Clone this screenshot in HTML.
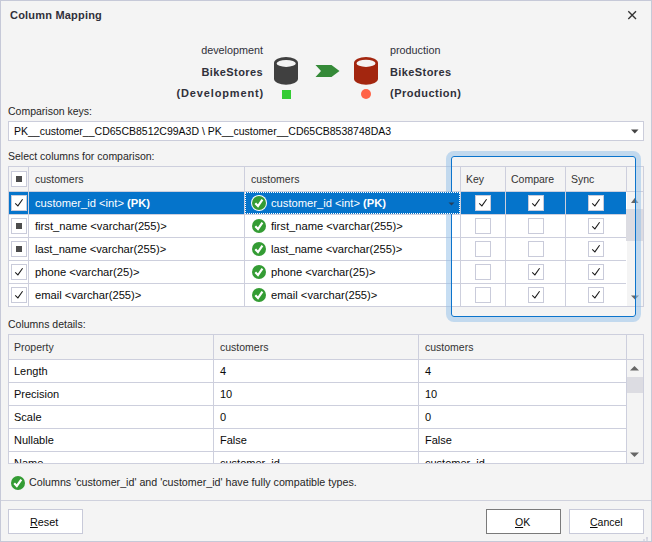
<!DOCTYPE html>
<html><head><meta charset="utf-8">
<style>
*{box-sizing:border-box;margin:0;padding:0}
html,body{width:652px;height:542px;overflow:hidden;background:#f4f4f4}
body{position:relative;font-family:"Liberation Sans",sans-serif;font-size:10.5px;color:#262626}
.a{position:absolute;white-space:pre;line-height:13px}
.b{font-weight:bold;font-size:11px;letter-spacing:0.4px;color:#30303a}
.hl{position:absolute}
.cb{position:absolute;width:16px;height:16px;border:1px solid #c9cbda;background:#fff}
.gi{position:absolute;width:16px;height:16px}
</style></head><body>
<div style="position:absolute;left:0;top:0;width:652px;height:542px;border:1px solid #c6c9d8"></div>

<!-- title -->
<div class="a b" style="left:10px;top:9px;letter-spacing:0.2px">Column Mapping</div>
<svg style="position:absolute;left:627px;top:10px" width="11" height="11" viewBox="0 0 11 11"><path d="M1.3 1.3L9 9M9 1.3L1.3 9" stroke="#333" stroke-width="1.35"/></svg>

<!-- header with db icons -->
<div class="a" style="right:389px;top:44px;font-size:10.8px;color:#30303a">development</div>
<div class="a b" style="right:389px;top:66px">BikeStores</div>
<div class="a b" style="right:388px;top:87px;letter-spacing:0.85px">(Development)</div>
<div class="a" style="left:390px;top:44px;font-size:10.8px;color:#30303a">production</div>
<div class="a b" style="left:390px;top:66px">BikeStores</div>
<div class="a b" style="left:390px;top:87px;letter-spacing:0.5px">(Production)</div>

<svg style="position:absolute;left:273px;top:56px" width="26" height="30" viewBox="0 0 26 30">
 <path d="M1 7 A12 6 0 0 1 25 7 L25 22.7 A12 6 0 0 1 1 22.7 Z" fill="#404040"/>
 <ellipse cx="13.2" cy="7.4" rx="9.6" ry="3.5" fill="#f4f4f4"/>
</svg>
<div style="position:absolute;left:282px;top:90px;width:9px;height:9px;background:#33cc33"></div>
<svg style="position:absolute;left:315px;top:64px" width="25" height="14" viewBox="0 0 25 14">
 <path d="M0.5 1 L16.5 1 L24.5 7 L16.5 13 L0.5 13 L6 7 Z" fill="#358a38"/>
</svg>
<svg style="position:absolute;left:353px;top:56px" width="26" height="30" viewBox="0 0 26 30">
 <path d="M1 7 A12 6 0 0 1 25 7 L25 22.7 A12 6 0 0 1 1 22.7 Z" fill="#a3260f"/>
 <ellipse cx="13" cy="7.3" rx="9.5" ry="3.6" fill="#f4f4f4"/>
</svg>
<div style="position:absolute;left:361px;top:89px;width:10px;height:10px;border-radius:50%;background:#ff6347"></div>

<!-- comparison keys -->
<div class="a" style="left:8px;top:105px">Comparison keys:</div>
<div style="position:absolute;left:8px;top:121px;width:636px;height:20px;border:1px solid #cbcddb;background:#fff"></div>
<div class="a" style="left:14px;top:125px;color:#0a0a0a">PK__customer__CD65CB8512C99A3D \ PK__customer__CD65CB8538748DA3</div>
<svg style="position:absolute;left:631px;top:129px" width="8" height="5" viewBox="0 0 8 5"><path d="M0 0.5L7.5 0.5L3.75 4.5Z" fill="#444"/></svg>

<div class="a" style="left:8px;top:150px">Select columns for comparison:</div>

<div class="a" style="left:8px;top:318px">Columns details:</div>

<div style="position:absolute;left:8px;top:166px;width:636px;height:141px;background:#fff"></div>
<div style="position:absolute;left:9px;top:167px;width:634px;height:24px;background:#f4f4f4"></div>
<div class="hl" style="left:8px;top:166px;width:636px;height:1px;background:#cdcfdd"></div>
<div class="hl" style="left:8px;top:191px;width:636px;height:1px;background:#cdcfdd"></div>
<div class="hl" style="left:8px;top:214px;width:618px;height:1px;background:#cdcfdd"></div>
<div class="hl" style="left:8px;top:237px;width:618px;height:1px;background:#cdcfdd"></div>
<div class="hl" style="left:8px;top:260px;width:618px;height:1px;background:#cdcfdd"></div>
<div class="hl" style="left:8px;top:283px;width:618px;height:1px;background:#cdcfdd"></div>
<div class="hl" style="left:8px;top:306px;width:636px;height:1px;background:#cdcfdd"></div>
<div class="hl" style="left:8px;top:166px;width:1px;height:141px;background:#cdcfdd"></div>
<div class="hl" style="left:28px;top:167px;width:1px;height:139px;background:#cdcfdd"></div>
<div class="hl" style="left:244px;top:167px;width:1px;height:139px;background:#cdcfdd"></div>
<div class="hl" style="left:460px;top:167px;width:1px;height:139px;background:#cdcfdd"></div>
<div class="hl" style="left:505px;top:167px;width:1px;height:139px;background:#cdcfdd"></div>
<div class="hl" style="left:565px;top:167px;width:1px;height:139px;background:#cdcfdd"></div>
<div class="hl" style="left:626px;top:167px;width:1px;height:24px;background:#cdcfdd"></div>
<div class="hl" style="left:643px;top:166px;width:1px;height:141px;background:#cdcfdd"></div>
<div style="position:absolute;left:627px;top:192px;width:16px;height:114px;background:#f4f4f4"></div>
<div style="position:absolute;left:626px;top:209px;width:17px;height:32px;background:#dcdce2"></div>
<svg style="position:absolute;left:631px;top:198px" width="8" height="5" viewBox="0 0 8 5"><path d="M0 5L7.5 5L3.75 0Z" fill="#666"/></svg>
<svg style="position:absolute;left:631px;top:295px" width="8" height="5" viewBox="0 0 8 5"><path d="M0 0.5L8 0.5L4 4.5Z" fill="#666"/></svg>
<div style="position:absolute;left:446px;top:151px;width:195px;height:171px;border:5px solid rgba(148,192,232,0.52);border-radius:8px"></div>
<div style="position:absolute;left:451px;top:156px;width:185px;height:161px;border:1px solid #0c74cc;border-radius:3px"></div>
<div style="position:absolute;left:9px;top:192px;width:19px;height:22px;background:#0574cb"></div>
<div style="position:absolute;left:29px;top:192px;width:215px;height:22px;background:#0574cb"></div>
<div style="position:absolute;left:245px;top:192px;width:215px;height:22px;background:#0574cb"></div>
<div style="position:absolute;left:461px;top:192px;width:44px;height:22px;background:#0574cb"></div>
<div style="position:absolute;left:506px;top:192px;width:59px;height:22px;background:#0574cb"></div>
<div style="position:absolute;left:566px;top:192px;width:60px;height:22px;background:#0574cb"></div>
<div class="cb" style="left:11px;top:171px"><div style="position:absolute;left:4px;top:4px;width:6px;height:6px;background:#4d4d4d"></div></div>
<div class="a" style="left:35px;top:173px;color:#333;">customers</div>
<div class="a" style="left:251px;top:173px;color:#333;">customers</div>
<div class="a" style="left:466px;top:173px;color:#333;">Key</div>
<div class="a" style="left:511px;top:173px;color:#333;">Compare</div>
<div class="a" style="left:571px;top:173px;color:#333;">Sync</div>
<div class="cb" style="left:11px;top:195px"><svg width="16" height="16" viewBox="0 0 16 16" style="position:absolute;left:-1px;top:-1px"><path d="M4.2 8.4L6.9 10.9L11.6 4.2" stroke="#1a1a1a" stroke-width="1.05" fill="none"/></svg></div>
<div class="a" style="left:35px;top:197px;color:#fff;font-size:11.2px">customer_id &lt;int&gt; <b>(PK)</b></div>
<svg class="gi" style="left:251px;top:195px" viewBox="0 0 16 16"><circle cx="8" cy="8" r="8" fill="#fff"/><circle cx="8" cy="8" r="7" fill="#349c34"/><path d="M4.3 8.3L7 11.1L11.4 4.6" stroke="#fff" stroke-width="2.2" fill="none"/></svg>
<div class="a" style="left:271px;top:197px;color:#fff;font-size:11.2px">customer_id &lt;int&gt; <b>(PK)</b></div>
<div class="cb" style="left:475px;top:195px"><svg width="16" height="16" viewBox="0 0 16 16" style="position:absolute;left:-1px;top:-1px"><path d="M4.2 8.4L6.9 10.9L11.6 4.2" stroke="#1a1a1a" stroke-width="1.05" fill="none"/></svg></div>
<div class="cb" style="left:528px;top:195px"><svg width="16" height="16" viewBox="0 0 16 16" style="position:absolute;left:-1px;top:-1px"><path d="M4.2 8.4L6.9 10.9L11.6 4.2" stroke="#1a1a1a" stroke-width="1.05" fill="none"/></svg></div>
<div class="cb" style="left:588px;top:195px"><svg width="16" height="16" viewBox="0 0 16 16" style="position:absolute;left:-1px;top:-1px"><path d="M4.2 8.4L6.9 10.9L11.6 4.2" stroke="#1a1a1a" stroke-width="1.05" fill="none"/></svg></div>
<div class="cb" style="left:11px;top:218px"><div style="position:absolute;left:4px;top:4px;width:6px;height:6px;background:#4d4d4d"></div></div>
<div class="a" style="left:35px;top:220px;color:#0a0a0a;font-size:11.2px">first_name &lt;varchar(255)&gt;</div>
<svg class="gi" style="left:251px;top:218px" viewBox="0 0 16 16"><circle cx="8" cy="8" r="7" fill="#349c34"/><path d="M4.3 8.3L7 11.1L11.4 4.6" stroke="#fff" stroke-width="2.2" fill="none"/></svg>
<div class="a" style="left:271px;top:220px;color:#0a0a0a;font-size:11.2px">first_name &lt;varchar(255)&gt;</div>
<div class="cb" style="left:475px;top:218px"></div>
<div class="cb" style="left:528px;top:218px"></div>
<div class="cb" style="left:588px;top:218px"><svg width="16" height="16" viewBox="0 0 16 16" style="position:absolute;left:-1px;top:-1px"><path d="M4.2 8.4L6.9 10.9L11.6 4.2" stroke="#1a1a1a" stroke-width="1.05" fill="none"/></svg></div>
<div class="cb" style="left:11px;top:241px"><div style="position:absolute;left:4px;top:4px;width:6px;height:6px;background:#4d4d4d"></div></div>
<div class="a" style="left:35px;top:243px;color:#0a0a0a;font-size:11.2px">last_name &lt;varchar(255)&gt;</div>
<svg class="gi" style="left:251px;top:241px" viewBox="0 0 16 16"><circle cx="8" cy="8" r="7" fill="#349c34"/><path d="M4.3 8.3L7 11.1L11.4 4.6" stroke="#fff" stroke-width="2.2" fill="none"/></svg>
<div class="a" style="left:271px;top:243px;color:#0a0a0a;font-size:11.2px">last_name &lt;varchar(255)&gt;</div>
<div class="cb" style="left:475px;top:241px"></div>
<div class="cb" style="left:528px;top:241px"></div>
<div class="cb" style="left:588px;top:241px"><svg width="16" height="16" viewBox="0 0 16 16" style="position:absolute;left:-1px;top:-1px"><path d="M4.2 8.4L6.9 10.9L11.6 4.2" stroke="#1a1a1a" stroke-width="1.05" fill="none"/></svg></div>
<div class="cb" style="left:11px;top:264px"><svg width="16" height="16" viewBox="0 0 16 16" style="position:absolute;left:-1px;top:-1px"><path d="M4.2 8.4L6.9 10.9L11.6 4.2" stroke="#1a1a1a" stroke-width="1.05" fill="none"/></svg></div>
<div class="a" style="left:35px;top:266px;color:#0a0a0a;font-size:11.2px">phone &lt;varchar(25)&gt;</div>
<svg class="gi" style="left:251px;top:264px" viewBox="0 0 16 16"><circle cx="8" cy="8" r="7" fill="#349c34"/><path d="M4.3 8.3L7 11.1L11.4 4.6" stroke="#fff" stroke-width="2.2" fill="none"/></svg>
<div class="a" style="left:271px;top:266px;color:#0a0a0a;font-size:11.2px">phone &lt;varchar(25)&gt;</div>
<div class="cb" style="left:475px;top:264px"></div>
<div class="cb" style="left:528px;top:264px"><svg width="16" height="16" viewBox="0 0 16 16" style="position:absolute;left:-1px;top:-1px"><path d="M4.2 8.4L6.9 10.9L11.6 4.2" stroke="#1a1a1a" stroke-width="1.05" fill="none"/></svg></div>
<div class="cb" style="left:588px;top:264px"><svg width="16" height="16" viewBox="0 0 16 16" style="position:absolute;left:-1px;top:-1px"><path d="M4.2 8.4L6.9 10.9L11.6 4.2" stroke="#1a1a1a" stroke-width="1.05" fill="none"/></svg></div>
<div class="cb" style="left:11px;top:287px"><svg width="16" height="16" viewBox="0 0 16 16" style="position:absolute;left:-1px;top:-1px"><path d="M4.2 8.4L6.9 10.9L11.6 4.2" stroke="#1a1a1a" stroke-width="1.05" fill="none"/></svg></div>
<div class="a" style="left:35px;top:289px;color:#0a0a0a;font-size:11.2px">email &lt;varchar(255)&gt;</div>
<svg class="gi" style="left:251px;top:287px" viewBox="0 0 16 16"><circle cx="8" cy="8" r="7" fill="#349c34"/><path d="M4.3 8.3L7 11.1L11.4 4.6" stroke="#fff" stroke-width="2.2" fill="none"/></svg>
<div class="a" style="left:271px;top:289px;color:#0a0a0a;font-size:11.2px">email &lt;varchar(255)&gt;</div>
<div class="cb" style="left:475px;top:287px"></div>
<div class="cb" style="left:528px;top:287px"><svg width="16" height="16" viewBox="0 0 16 16" style="position:absolute;left:-1px;top:-1px"><path d="M4.2 8.4L6.9 10.9L11.6 4.2" stroke="#1a1a1a" stroke-width="1.05" fill="none"/></svg></div>
<div class="cb" style="left:588px;top:287px"><svg width="16" height="16" viewBox="0 0 16 16" style="position:absolute;left:-1px;top:-1px"><path d="M4.2 8.4L6.9 10.9L11.6 4.2" stroke="#1a1a1a" stroke-width="1.05" fill="none"/></svg></div>
<div style="position:absolute;left:245px;top:192px;width:215px;height:22px;border:1px dotted #fff"></div>
<svg style="position:absolute;left:448px;top:202px" width="7" height="4" viewBox="0 0 7 4"><path d="M0.5 0.5L6.5 0.5L3.5 3.5Z" fill="#24405e"/></svg>
<div style="position:absolute;left:8px;top:334px;width:636px;height:130px;background:#fff"></div>
<div style="position:absolute;left:9px;top:335px;width:634px;height:24px;background:#f4f4f4"></div>
<div style="position:absolute;left:627px;top:360px;width:16px;height:103px;background:#f4f4f4"></div>
<div style="position:absolute;left:627px;top:377px;width:16px;height:16px;background:#dcdce2"></div>
<svg style="position:absolute;left:630px;top:366px" width="9" height="5" viewBox="0 0 9 5"><path d="M0 4.5L9 4.5L4.5 0Z" fill="#666"/></svg>
<svg style="position:absolute;left:630px;top:452px" width="9" height="5" viewBox="0 0 9 5"><path d="M0 0.5L9 0.5L4.5 5Z" fill="#666"/></svg>
<div class="hl" style="left:8px;top:334px;width:636px;height:1px;background:#cdcfdd"></div>
<div class="hl" style="left:8px;top:359px;width:636px;height:1px;background:#cdcfdd"></div>
<div class="hl" style="left:8px;top:382px;width:619px;height:1px;background:#cdcfdd"></div>
<div class="hl" style="left:8px;top:405px;width:619px;height:1px;background:#cdcfdd"></div>
<div class="hl" style="left:8px;top:428px;width:619px;height:1px;background:#cdcfdd"></div>
<div class="hl" style="left:8px;top:451px;width:619px;height:1px;background:#cdcfdd"></div>
<div class="hl" style="left:8px;top:463px;width:636px;height:1px;background:#cdcfdd"></div>
<div class="hl" style="left:8px;top:334px;width:1px;height:130px;background:#cdcfdd"></div>
<div class="hl" style="left:213px;top:335px;width:1px;height:128px;background:#cdcfdd"></div>
<div class="hl" style="left:418px;top:335px;width:1px;height:128px;background:#cdcfdd"></div>
<div class="hl" style="left:626px;top:335px;width:1px;height:128px;background:#cdcfdd"></div>
<div class="hl" style="left:643px;top:334px;width:1px;height:130px;background:#cdcfdd"></div>
<div class="a" style="left:14px;top:341px;color:#333;">Property</div>
<div class="a" style="left:220px;top:341px;color:#333;">customers</div>
<div class="a" style="left:425px;top:341px;color:#333;">customers</div>
<div style="position:absolute;left:9px;top:360px;width:617px;height:103px;overflow:hidden">
<div class="a" style="left:5px;top:5px;color:#0a0a0a;font-size:11px">Length</div>
<div class="a" style="left:211px;top:5px;color:#0a0a0a;font-size:11px">4</div>
<div class="a" style="left:416px;top:5px;color:#0a0a0a;font-size:11px">4</div>
<div class="a" style="left:5px;top:28px;color:#0a0a0a;font-size:11px">Precision</div>
<div class="a" style="left:211px;top:28px;color:#0a0a0a;font-size:11px">10</div>
<div class="a" style="left:416px;top:28px;color:#0a0a0a;font-size:11px">10</div>
<div class="a" style="left:5px;top:51px;color:#0a0a0a;font-size:11px">Scale</div>
<div class="a" style="left:211px;top:51px;color:#0a0a0a;font-size:11px">0</div>
<div class="a" style="left:416px;top:51px;color:#0a0a0a;font-size:11px">0</div>
<div class="a" style="left:5px;top:74px;color:#0a0a0a;font-size:11px">Nullable</div>
<div class="a" style="left:211px;top:74px;color:#0a0a0a;font-size:11px">False</div>
<div class="a" style="left:416px;top:74px;color:#0a0a0a;font-size:11px">False</div>
<div class="a" style="left:5px;top:97px;color:#0a0a0a;font-size:11px">Name</div>
<div class="a" style="left:211px;top:97px;color:#0a0a0a;font-size:11px">customer_id</div>
<div class="a" style="left:416px;top:97px;color:#0a0a0a;font-size:11px">customer_id</div>
</div>

<!-- status -->
<svg style="position:absolute;left:11px;top:476px" width="14" height="14" viewBox="0 0 14 14"><circle cx="7" cy="7" r="7" fill="#349c34"/><path d="M3.2 7.3L5.8 10L10.3 3.6" stroke="#fff" stroke-width="2.2" fill="none"/></svg>
<div class="a" style="left:29px;top:476px;font-size:10.7px">Columns 'customer_id' and 'customer_id' have fully compatible types.</div>

<!-- footer -->
<div class="hl" style="left:1px;top:500px;width:650px;height:1px;background:#cfd1dd"></div>
<div style="position:absolute;left:8px;top:509px;width:75px;height:25px;border:1px solid #c8cad9;background:#fff"></div>
<div class="a" style="left:30px;top:516px;color:#0a0a0a;font-size:10.8px"><u>R</u>eset</div>
<div style="position:absolute;left:486px;top:509px;width:75px;height:25px;border:1px solid #7a7a7a;background:#fff"></div>
<div class="a" style="left:515px;top:516px;color:#0a0a0a"><u>O</u>K</div>
<div style="position:absolute;left:569px;top:509px;width:75px;height:25px;border:1px solid #c8cad9;background:#fff"></div>
<div class="a" style="left:590px;top:516px;color:#0a0a0a"><u>C</u>ancel</div>

<div style="position:absolute;left:646px;top:537px;width:2px;height:2px;background:#d4d4e0"></div>
<div style="position:absolute;left:643px;top:539px;width:2px;height:2px;background:#dcdce6"></div>
<div style="position:absolute;left:646px;top:539px;width:2px;height:2px;background:#dcdce6"></div>
</body></html>
